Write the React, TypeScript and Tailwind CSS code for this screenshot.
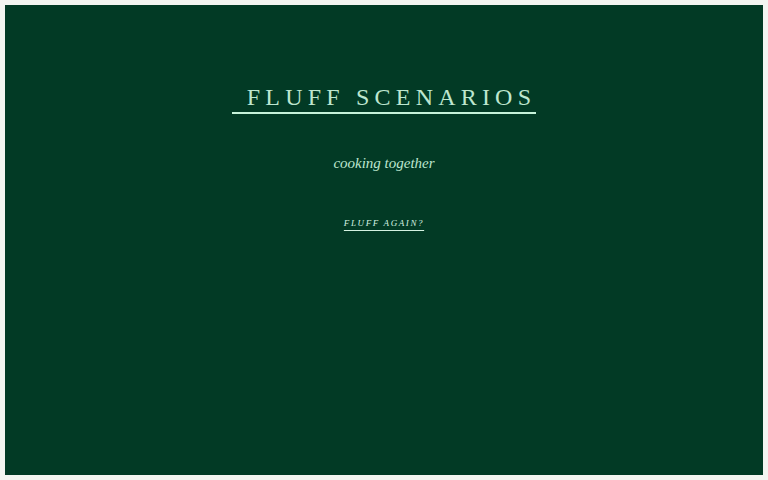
import React from "react";

const serif = { fontFamily: '"Liberation Serif", "DejaVu Serif", serif' };

const App = () => {
  return (
    <div className="h-[480px] w-full bg-[#f3f5f1] p-[5px]" style={serif}>
      <div className="flex h-full w-full flex-col items-center bg-[#023a25] pt-[80px]">
        <h1 className="inline-block border-b-2 border-[#c6f3da] pl-[15px] pb-[3px] text-[24px] leading-[24px] tracking-[5.2px] text-[#bde6cf]">
          FLUFF SCENARIOS
        </h1>
        <p className="mt-[39px] text-[15px] italic leading-[20px] text-[#bde6cf]">
          cooking together
        </p>
        <a
          href="#"
          className="mt-[44px] text-[9px] italic leading-[12px] tracking-[1.6px] text-[#d5f3e2] underline underline-offset-4"
        >
          FLUFF AGAIN?
        </a>
      </div>
    </div>
  );
};

export default App;
